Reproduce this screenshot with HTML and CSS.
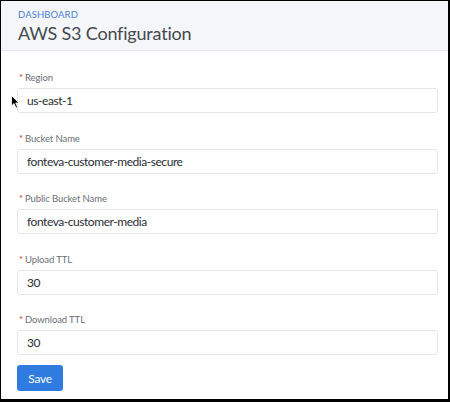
FILE: index.html
```html
<!DOCTYPE html>
<html>
<head>
<meta charset="utf-8">
<link rel="stylesheet" href="styles.css">
</head>
<body>
<div class="frame">
  <header class="page-header">
    <div class="crumb">DASHBOARD</div>
    <h1 class="title">AWS S3 Configuration</h1>
  </header>
  <form class="form">
    <div class="field">
      <label class="label"><abbr class="req">*</abbr>Region</label>
      <div class="input">us-east-1</div>
    </div>
    <div class="field">
      <label class="label"><abbr class="req">*</abbr>Bucket Name</label>
      <div class="input">fonteva-customer-media-secure</div>
    </div>
    <div class="field">
      <label class="label"><abbr class="req">*</abbr>Public Bucket Name</label>
      <div class="input">fonteva-customer-media</div>
    </div>
    <div class="field">
      <label class="label"><abbr class="req">*</abbr>Upload TTL</label>
      <div class="input">30</div>
    </div>
    <div class="field">
      <label class="label"><abbr class="req">*</abbr>Download TTL</label>
      <div class="input">30</div>
    </div>
    <div class="actions">
      <button type="button" class="btn">Save</button>
    </div>
  </form>
  <svg class="cursor" width="9" height="14" viewBox="0 0 9 14">
    <path d="M0.5 0.5 L0.5 11 L3 8.6 L5 13 L6.6 12.3 L4.7 8 L8 8 Z" fill="#000" stroke="#fff" stroke-width="0.8"/>
  </svg>
</div>
</body>
</html>
```
FILE: styles.css
```css
* { box-sizing: border-box; }
html, body { margin: 0; padding: 0; background: #000; }
body { font-family: Lato, "Open Sans", sans-serif; }
.frame {
  position: relative;
  width: 450px;
  height: 402px;
  background: #fff;
  border-style: solid;
  border-color: #000;
  border-width: 1px 2px 3px 1px;
  overflow: hidden;
}
.page-header {
  height: 50px;
  background: #f4f6f9;
  border-bottom: 1px solid #e6e8ec;
  padding: 8px 0 0 17px;
}
.crumb {
  font-size: 9.5px;
  line-height: 11px;
  color: #4d7fd4;
  letter-spacing: 0.1px;
}
.title {
  margin: 1px 0 0;
  font-size: 18px;
  line-height: 24px;
  font-weight: 400;
  letter-spacing: -0.2px;
  color: #45494e;
}
.form {
  padding: 20px 10px 0 16px;
  display: flex;
  flex-direction: column;
}
.field {
  display: flex;
  flex-direction: column;
  gap: 3px;
  margin-bottom: 18.5px;
}
.field:nth-child(5) { margin-bottom: 10px; }
.label {
  font-size: 9.5px;
  line-height: 14px;
  color: #6b6f75;
  letter-spacing: -0.1px;
  padding-left: 2px;
}
.req {
  color: #c23934;
  text-decoration: none;
  margin-right: 2px;
}
.input {
  height: 25px;
  border: 1px solid #e4e6ea;
  border-radius: 3px;
  padding: 0 9px;
  font-size: 12px;
  letter-spacing: -0.45px;
  line-height: 23px;
  color: #2a2e33;
  background: #fff;
}
.actions { display: flex; }
.btn {
  width: 46px;
  height: 26px;
  border: none;
  border-radius: 3px;
  background: #2f7be0;
  color: #fff;
  font-family: Lato, "Open Sans", sans-serif;
  font-size: 12px;
  letter-spacing: -0.3px;
  padding: 0;
}
.cursor {
  position: absolute;
  left: 10px;
  top: 94px;
}
```
